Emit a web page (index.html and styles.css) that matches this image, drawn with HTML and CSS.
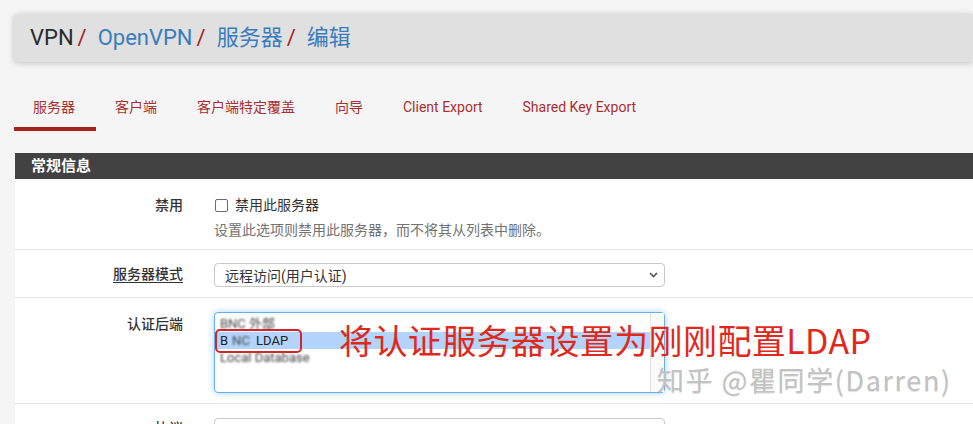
FILE: index.html
```
<!DOCTYPE html>
<html lang="zh-CN">
<head>
    <meta charset="UTF-8">
    <meta name="viewport" content="width=device-width, initial-scale=1.0">
    <title>VPN / OpenVPN / 服务器 / 编辑</title>
    <link rel="stylesheet" href="styles.css">
</head>
<body>
<header class="crumbBar">
    <h1 class="crumbs">VPN<span class="sep">/</span><a href="#">OpenVPN</a><span class="sep">/</span><a href="#">服务器</a><span class="sep">/</span><a href="#">编辑</a></h1>
</header>
<ul class="tabs">
    <li class="tab active"><a href="#">服务器</a></li>
    <li class="tab"><a href="#">客户端</a></li>
    <li class="tab"><a href="#">客户端特定覆盖</a></li>
    <li class="tab"><a href="#">向导</a></li>
    <li class="tab"><a href="#">Client Export</a></li>
    <li class="tab"><a href="#">Shared Key Export</a></li>
</ul>
<section class="panel">
    <h2 class="panelHeading">常规信息</h2>
    <div class="formRow rowDisable">
        <label class="rowLabel">禁用</label>
        <div class="rowControl">
            <div class="checkLine"><span class="checkBox"></span>禁用此服务器</div>
            <p class="helpText">设置此选项则禁用此服务器，而不将其从列表中删除。</p>
        </div>
    </div>
    <div class="formRow rowMode">
        <label class="rowLabel"><span class="abbr">服务器模式</span></label>
        <div class="rowControl">
            <div class="selectBox">
                <span>远程访问(用户认证)</span>
                <svg class="chevron" width="9" height="6" viewBox="0 0 9 6"><path d="M1 1l3.5 3.5L8 1" fill="none" stroke="#555" stroke-width="1.6"/></svg>
            </div>
        </div>
    </div>
    <div class="formRow rowBackend">
        <label class="rowLabel">认证后端</label>
        <div class="rowControl">
            <div class="listBox">
                <ul class="options">
                    <li class="option"><span class="masked">BNC 外部</span></li>
                    <li class="option selected">B<span class="masked wide">NC</span> LDAP</li>
                    <li class="option"><span class="masked">Local Database</span></li>
                </ul>
                <div class="scrollGutter"></div>
            </div>
        </div>
        <div class="markBox"></div>
        <div class="noteText">将认证服务器设置为刚刚配置LDAP</div>
        <div class="watermark">知乎 @瞿同学(Darren)</div>
    </div>
    <div class="formRow rowProto">
        <label class="rowLabel">协议</label>
        <div class="rowControl">
            <div class="selectBox"><span>UDP on IPv4 only</span></div>
        </div>
    </div>
</section>
</body>
</html>
```
FILE: styles.css
```
html{
    overflow: hidden;
}
body{
    margin: 0;
    background-color: #f5f5f5;
    font-family: Roboto, "Noto Sans CJK SC", sans-serif;
    font-size: 14px;
    color: #333;
}
a{
    text-decoration: none;
}
.crumbBar{
    margin: 14px 0 0 14px;
    height: 48px;
    background-color: #e0e0e0;
    border-radius: 4px 0 0 4px;
    box-shadow: 0 1px 6px rgba(0,0,0,0.22);
    display: flex;
    align-items: center;
    padding-left: 16px;
}
.crumbs{
    margin: 0;
    font-size: 22px;
    font-weight: 400;
    color: #2a2a2a;
    line-height: 30px;
}
.crumbs a{
    color: #3a7cbd;
}
.sep{
    color: #a8201e;
    margin: 0 11px 0 4px;
}
.tabs{
    list-style: none;
    margin: 22px 0 0 14px;
    padding: 0;
    display: flex;
}
.tab a{
    display: block;
    padding: 13px 21px 10px 19px;
    line-height: 20px;
    color: #a83030;
    border-bottom: 4px solid transparent;
}
.tab.active a{
    border-bottom-color: #a6201e;
}
.panel{
    margin: 22px 0 0 15px;
    background-color: #fff;
}
.panelHeading{
    margin: 0;
    height: 26px;
    line-height: 26px;
    padding-left: 16px;
    background-color: #424242;
    color: #fff;
    font-size: 15px;
    font-weight: 700;
}
.formRow{
    position: relative;
    display: grid;
    grid-template-columns: 168px 451px;
    column-gap: 31px;
    border-bottom: 1px solid #e4e4e4;
}
.rowLabel{
    text-align: right;
    font-weight: 500;
    color: #333;
    line-height: 20px;
}
.rowDisable{
    padding: 16px 0 9px;
}
.checkLine{
    display: flex;
    align-items: center;
    line-height: 20px;
    white-space: nowrap;
}
.checkBox{
    width: 11px;
    height: 11px;
    border: 1px solid #6b6b6b;
    border-radius: 2px;
    margin: 0 7px 0 1px;
    background-color: #fff;
}
.helpText{
    margin: 5px 0 0;
    line-height: 20px;
    color: #737373;
    white-space: nowrap;
}
.rowMode{
    padding: 13px 0 10px;
}
.rowMode .rowLabel{
    line-height: 22px;
}
.abbr{
    text-decoration: underline;
    text-underline-offset: 3px;
}
.selectBox{
    height: 22px;
    border: 1px solid #c8c8c8;
    border-radius: 4px;
    background-color: #fff;
    display: flex;
    align-items: center;
    justify-content: space-between;
    padding: 0 5px 0 10px;
}
.chevron{
    margin-right: 1px;
}
.rowBackend{
    padding: 14px 0 10px;
}
.rowBackend .rowLabel{
    padding-top: 2px;
}
.listBox{
    height: 79px;
    border: 1px solid #66afe9;
    border-radius: 4px;
    background-color: #fff;
    box-shadow: 0 0 7px rgba(102,175,233,0.55);
    display: flex;
}
.options{
    list-style: none;
    margin: 0;
    padding: 2px 0 0;
    flex: 1;
}
.option{
    height: 17px;
    line-height: 17px;
    padding-left: 5px;
    font-size: 13px;
    color: #222;
    white-space: nowrap;
}
.option.selected{
    background-color: #b3d4fc;
}
.masked{
    filter: blur(1.2px);
    color: #444;
}
.masked.wide{
    display: inline-block;
    margin: 0 3px 0 4px;
}
.scrollGutter{
    width: 13px;
    border-left: 1px solid #e2e2e2;
    background-color: #fafafa;
}
.markBox{
    position: absolute;
    left: 200px;
    top: 31px;
    width: 83px;
    height: 20px;
    border: 2.5px solid #d3262a;
    border-radius: 5px;
}
.noteText{
    position: absolute;
    left: 324px;
    top: 22px;
    font-family: "Noto Sans CJK SC", sans-serif;
    font-size: 34px;
    line-height: 40px;
    letter-spacing: 0.4px;
    color: #e0281c;
    white-space: nowrap;
}
.watermark{
    position: absolute;
    left: 642px;
    top: 66px;
    font-family: "Noto Sans CJK SC", sans-serif;
    font-size: 27px;
    line-height: 32px;
    letter-spacing: 1.6px;
    color: #c2c2c2;
    text-shadow: 0 1px 1px rgba(0,0,0,0.12);
    white-space: nowrap;
}
.rowProto{
    padding: 14px 0 10px;
}
```
